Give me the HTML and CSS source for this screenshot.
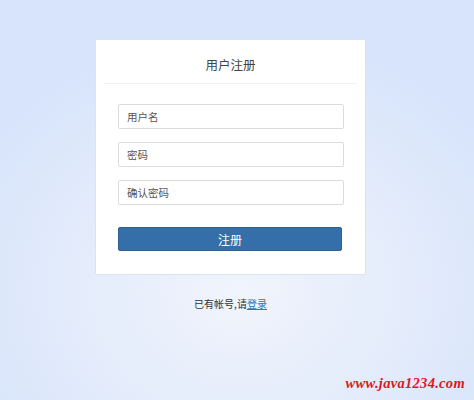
FILE: index.html
```html
<!DOCTYPE html>
<html lang="zh-CN">
<head>
    <meta charset="UTF-8">
    <meta name="viewport" content="width=device-width, initial-scale=1.0">
    <title>用户注册</title>
    <link rel="stylesheet" href="styles.css">
</head>
<body>
    <div class="wrap">
        <div class="panel">
            <div class="panel-heading">用户注册</div>
            <div class="panel-body">
                <input class="field" type="text" placeholder="用户名">
                <input class="field" type="password" placeholder="密码">
                <input class="field" type="password" placeholder="确认密码">
                <button class="btn">注册</button>
            </div>
        </div>
        <p class="tip">已有帐号,请<a href="#">登录</a></p>
    </div>
    <div class="watermark">www.java1234.com</div>
</body>
</html>
```

FILE: styles.css
```css
html, body {
    height: 100%;
}

body {
    margin: 0;
    font-family: "Noto Sans CJK SC", "Liberation Sans", sans-serif;
    background: radial-gradient(ellipse 300px 260px at 240px 290px, #f0f4fc 0%, #e4ecfb 55%, #d7e4fb 100%);
    background-color: #d7e4fb;
    position: relative;
    overflow: hidden;
}

.wrap {
    width: 271px;
    padding: 39px 0 0 95px;
}

.panel {
    background-color: #fff;
    border: 1px solid #dde3ec;
    border-radius: 2px;
    box-sizing: border-box;
}

.panel-heading {
    height: 43px;
    line-height: 50px;
    text-align: center;
    font-size: 12.5px;
    color: #444;
    border-bottom: 1px solid #f1f2f4;
    margin: 0 8px;
}

.panel-body {
    display: flex;
    flex-direction: column;
    padding: 20px 21px 23px 22px;
}

.field {
    height: 25px;
    margin-bottom: 13px;
    padding: 0 8px;
    border: 1px solid #d9dde2;
    border-radius: 2px;
    box-sizing: border-box;
    font-family: inherit;
    font-size: 10.5px;
    color: #444;
}

.field::placeholder {
    color: #555;
}

.btn {
    margin-top: 9px;
    width: 224px;
    height: 24px;
    background-color: #356fa9;
    border: 1px solid #2e6095;
    border-radius: 2px;
    color: #fff;
    font-family: inherit;
    font-size: 12px;
    cursor: pointer;
}

.tip {
    margin: 21px 0 0;
    text-align: center;
    font-size: 10px;
    color: #333;
}

.tip a {
    color: #2a7ab5;
}

.watermark {
    position: absolute;
    right: 9px;
    bottom: 8px;
    font-family: "Liberation Serif", serif;
    font-weight: bold;
    font-style: italic;
    font-size: 14.5px;
    color: #e0161d;
    letter-spacing: 0.3px;
}
```
